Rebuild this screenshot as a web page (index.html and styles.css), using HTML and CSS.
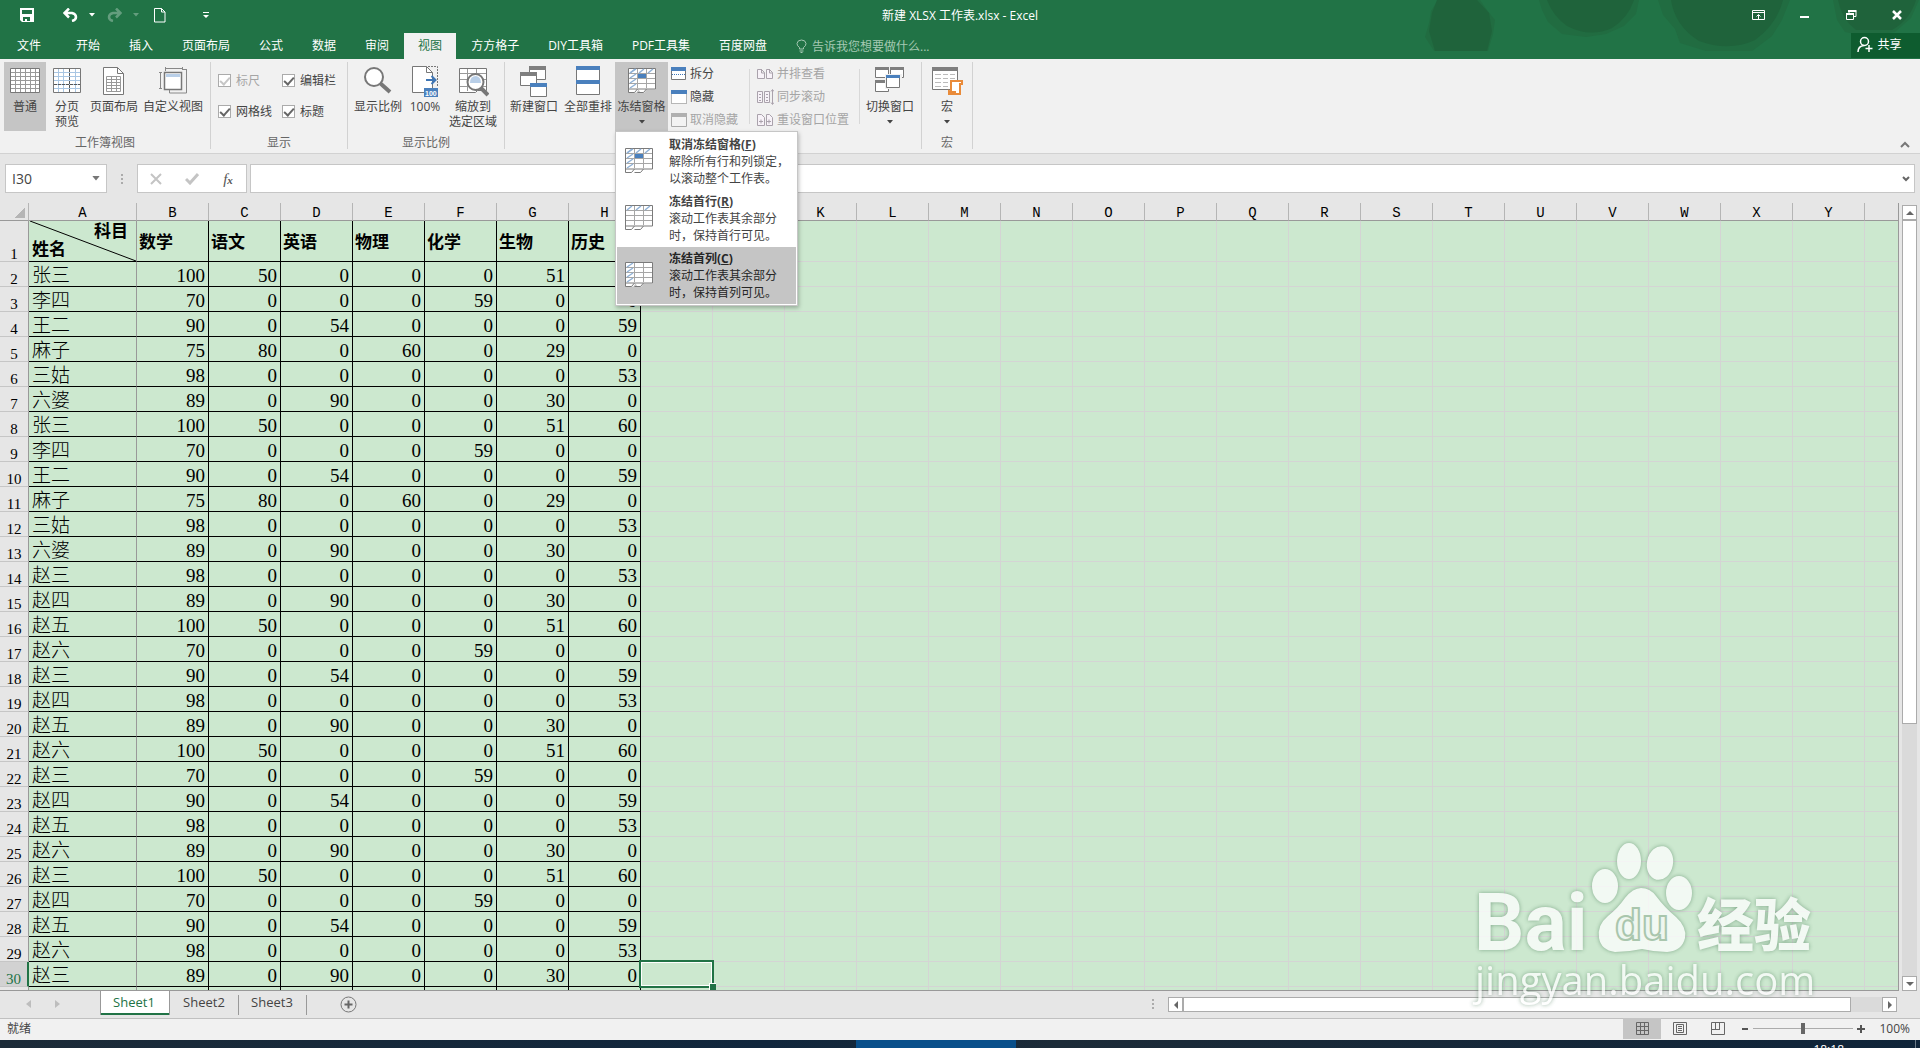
FILE: index.html
```html
<!DOCTYPE html>
<html lang="zh-CN">
<head>
<meta charset="utf-8">
<title>新建 XLSX 工作表.xlsx - Excel</title>
<link rel="stylesheet" href="styles.css">
</head>
<body>
<svg class="sprites" aria-hidden="true">
  <symbol id="sheet" viewBox="0 0 32 32">
    <path d="M2.500 3.500h27v21h-9l-2 3h-4l-2-3-2 3h-8z" fill="#fff" stroke="none"/>
    <path d="M2 8.500h27M2 13.500h27M2 18.500h27M11.500 3v20M20.500 3v20" stroke="#a6a6a6" fill="none"/>
    <path d="M2.500 27.500v-24h27v20.500H2.500M2.500 27.500h6l3-3.500M11.500 27.500h6l3-3.500" stroke="#7a7a7a" fill="none"/>
  </symbol>
  <symbol id="hatch-row" viewBox="0 0 32 32"><path d="M4 8l5-4M13 8l5-4M22 8l5-4" stroke="#8fb1d6" stroke-width="1.500"/></symbol>
  <symbol id="hatch-col" viewBox="0 0 32 32"><path d="M4 8l6-4M4 13l6-4M4 18l6-4M4 23l6-4" stroke="#8fb1d6" stroke-width="1.500"/></symbol>
  <symbol id="freeze" viewBox="0 0 32 32"><use href="#sheet"/><use href="#hatch-row"/><use href="#hatch-col"/><path d="M12 9h8v4h-8z" fill="#4a80bd"/></symbol>
  <symbol id="down" viewBox="0 0 6 4"><path d="M0 0h6L3 3.500z" fill="currentColor"/></symbol>
</svg>

<header class="top">
  <svg class="splashes" width="520" height="52" aria-hidden="true">
    <g fill="#216c41">
      <path d="M38 0h42l7 10 8 10-2 14-5 17H34l-9-14 4-14 2-12z"/>
      <path d="M139 0h100l-3 14-12 12-18 8-20 3-24-3-14-12-6-12z"/>
      <path d="M258 0h132l-8 20-10 16-20 15h-46l-26-8-5-14-12-14z"/>
      <path d="M433 0h86l-8 18-16 14-30 4-20-4-8-12z"/>
    </g>
    <g fill="#1f633b">
      <path d="M37 0h40l12 13 3 18-5 20H35l-6-20 3-18z"/>
      <path d="M147 0h87q-6 18-22 28-22 10-45-2-14-10-20-26z"/>
      <path d="M271 0h112q-6 24-28 40-26 12-56 1-24-15-28-41z"/>
      <path d="M438 0h78q-6 20-24 30h-36q-14-10-18-30z"/>
    </g>
  </svg>
  <div class="titlebar">
    <div class="quick">
      <button class="q-save" aria-label="保存"><svg width="14" height="14"><path fill="#fff" fill-rule="evenodd" d="M0 0h14v14H2l-2-2zM2 2v4h10V2zM3 9v4h2v-2h2v2h3V9z"/></svg></button>
      <button class="q-undo" aria-label="撤消"><svg width="15" height="14"><path d="M2 5h7q4 1 4 4 0 3-4 4M6 0.500L1.500 5 6 9.500" fill="none" stroke="#fff" stroke-width="2.500"/></svg></button>
      <button class="q-caret" aria-label="撤消列表"><svg width="6" height="4" color="#fff"><use href="#down"/></svg></button>
      <button class="q-undo dim" aria-label="恢复"><svg width="15" height="14"><path d="M13 5H6q-4 1-4 4 0 3 4 4M9 0.500L13.500 5 9 9.500" fill="none" stroke="#fff" stroke-width="2.500"/></svg></button>
      <button class="q-caret dim" aria-label="恢复列表"><svg width="6" height="4" color="#fff"><use href="#down"/></svg></button>
      <button class="q-new" aria-label="新建"><svg width="12" height="15"><path d="M.5.5h7l3.500 3.500v10H.5zM7.500.5V4H11" fill="none" stroke="#fff"/></svg></button>
      <button class="q-more" aria-label="自定义快速访问工具栏"><svg width="6" height="7"><path d="M0 0h6v1H0zM0 3h6L3 6z" fill="#fff"/></svg></button>
    </div>
    <h1>新建 XLSX 工作表.xlsx - Excel</h1>
    <div class="window">
      <button aria-label="功能区显示选项"><svg width="14" height="11"><path d="M.5.5h12v9H.5zM0 2.500h13M6.500 9V5M4.500 6.500l2-2 2 2" fill="none" stroke="#fff"/></svg></button>
      <button aria-label="最小化"><svg width="10" height="10"><path d="M0 6h9v2H0z" fill="#fff"/></svg></button>
      <button aria-label="向下还原"><svg width="11" height="11"><path d="M.5 4.500h7v5h-7zM3 4V1.500h7v5H8" fill="none" stroke="#fff"/><path d="M2 0h8.500v2H2zM0 3h8v2H0z" fill="#fff"/></svg></button>
      <button aria-label="关闭"><svg width="10" height="10"><path d="M1 1l8 8M9 1L1 9" stroke="#fff" stroke-width="2.500"/></svg></button>
    </div>
  </div>
  <nav class="tabs">
    <button class="file">文件</button><button>开始</button><button>插入</button><button>页面布局</button><button>公式</button><button>数据</button><button>审阅</button><button class="active">视图</button><button>方方格子</button><button>DIY工具箱</button><button>PDF工具集</button><button>百度网盘</button>
    <label class="tell"><svg width="11" height="14"><path d="M3.500 10V8.500Q1 7 1 4.500 1.500 1 5.500 1 9.500 1 10 4.500 10 7 7.500 8.500V10zM3.500 12h4M4.500 13.500h2" fill="none" stroke="#a5c9b3"/></svg><input type="text" placeholder="告诉我您想要做什么..."></label>
    <button class="share"><svg width="16" height="17"><circle cx="7.500" cy="5.500" r="4" fill="none" stroke="#fff" stroke-width="1.500"/><path d="M1 16q0-6 6-6.500M12 9v7M8.500 12.500h7" fill="none" stroke="#fff" stroke-width="1.500"/></svg>共享</button>
  </nav>
</header>

<section class="ribbon">
  <div class="group g-views">
    <div class="controls">
      <button class="big w42 on"><svg width="32" height="32"><path d="M1.500 3.500h29v24h-29z" fill="#fff" stroke="#777"/><path d="M2 7.500h28M2 11.500h28M2 15.500h28M2 19.500h28M2 23.500h28M6.500 4v23M11.500 4v23M16.500 4v23M21.500 4v23M26.500 4v23" stroke="#999"/></svg>普通</button>
      <button class="big w42"><svg width="32" height="32"><path d="M2.500 3.500h27v24h-27z" fill="#fff" stroke="#777"/><path d="M3 7.500h26M3 11.500h26M3 15.500h26M3 19.500h26M3 23.500h26M7.500 4v23M12.500 4v23M24.500 4v23" stroke="#a9c6e3"/><path d="M18.500 4v23M3 19.500h26" stroke="#555" stroke-dasharray="3 1"/></svg>分页<br>预览</button>
      <button class="big w52"><svg width="32" height="32"><path d="M5.500 2.500h14l6 6v21h-20z" fill="#fff" stroke="#777"/><path d="M19.500 2.500v6h6" fill="none" stroke="#777"/><path d="M8.500 11.500h14v15h-14zM8.500 14.500h14M8.500 17.500h14M8.500 20.500h14M8.500 23.500h14M13.500 11v15M18.500 11v15" fill="none" stroke="#999"/></svg>页面布局</button>
      <button class="big w66"><svg width="32" height="32"><path d="M7.500 7.500h17v17h-17z" fill="#fff" stroke="#777" stroke-width="1.500"/><path d="M9 9h14v3H9z" fill="#b9cfe8"/><path d="M8 3.500h18M8.500 2v4M25.500 2v3M3.500 7v17M2 7.500h3M2 23.500h3M29.500 4v24h-17v-3M25 4.500h4" fill="none" stroke="#888"/></svg>自定义视图</button>
    </div>
    <div class="caption">工作簿视图</div>
  </div>
  <div class="group g-show">
    <div class="controls checks">
      <label class="off"><input type="checkbox" checked disabled>标尺</label>
      <label><input type="checkbox" checked>编辑栏</label>
      <label><input type="checkbox" checked>网格线</label>
      <label><input type="checkbox" checked>标题</label>
    </div>
    <div class="caption">显示</div>
  </div>
  <div class="group g-zoom">
    <div class="controls">
      <button class="big w52"><svg width="32" height="32"><circle cx="12" cy="12" r="9" fill="#fff" stroke="#777" stroke-width="2"/><path d="M18.500 18.500L28 27" stroke="#777" stroke-width="4"/></svg>显示比例</button>
      <button class="big w42"><svg width="32" height="32"><path d="M3.500 27.500v-26h14l6 6v20z" fill="#fff" stroke="#777"/><path d="M17.500 1.500v6h6" fill="none" stroke="#777"/><path d="M19 1.500h9.500V22" fill="none" stroke="#777" stroke-dasharray="2 1"/><path d="M17 15h9M22.500 11l4 4-4 4" fill="none" stroke="#3f76b5" stroke-width="2"/><path d="M15 23h14v9H15z" fill="#4a80bd"/><text x="16" y="31" class="tiny">100</text></svg>100%</button>
      <button class="big w54"><svg width="32" height="32"><path d="M2.500 3.500h27v22h-9l-2 2h-16z" fill="#fff" stroke="#777"/><path d="M3 8.500h26M3 14.500h26M3 21.500h26M10.500 4v22M19.500 4v22" stroke="#999"/><circle cx="18.500" cy="17" r="8" fill="#fff" stroke="#777" stroke-width="2"/><path d="M13 18q0-7 6-7 5 1 5 7z" fill="#b9cfe8"/><path d="M24 23l7 7" stroke="#777" stroke-width="4"/></svg>缩放到<br>选定区域</button>
    </div>
    <div class="caption">显示比例</div>
  </div>
  <div class="group g-window">
    <div class="controls">
      <button class="big w54"><svg width="32" height="32"><g fill="#fff" stroke="#777"><path d="M11.500 1.500h16v13h-16z"/><path d="M2.500 7.500h16v13h-16z"/><path d="M12.500 18.500h16v13h-16z"/></g><path d="M11 1h17v4H11zM2 7h17v4H2z" fill="#7f7f7f"/><path d="M12 18h17v4H12z" fill="#4a80bd"/></svg>新建窗口</button>
      <button class="big w54"><svg width="32" height="32"><path d="M4.500 1.500h23v28h-23z" fill="#fff" stroke="#777"/><path d="M4 1h24v4H4zM4 15h24v4H4z" fill="#4a80bd"/></svg>全部重排</button>
      <div class="drop">
        <button class="big w53 on" aria-expanded="true"><svg width="32" height="32"><use href="#freeze"/></svg>冻结窗格<svg class="arrow" width="6" height="4"><use href="#down"/></svg></button>
        <div class="menu" role="menu">
          <button role="menuitem"><svg width="32" height="32"><use href="#freeze"/></svg><span><b>取消冻结窗格(<u>F</u>)</b>解除所有行和列锁定，<br>以滚动整个工作表。</span></button>
          <button role="menuitem"><svg width="32" height="32"><use href="#sheet"/><use href="#hatch-row"/></svg><span><b>冻结首行(<u>R</u>)</b>滚动工作表其余部分<br>时，保持首行可见。</span></button>
          <button role="menuitem" class="hover"><svg width="32" height="32"><use href="#sheet"/><use href="#hatch-col"/></svg><span><b>冻结首列(<u>C</u>)</b>滚动工作表其余部分<br>时，保持首列可见。</span></button>
        </div>
      </div>
      <div class="stack s1">
        <button><svg width="16" height="14"><path d="M.5 1.500h14v11H.5z" fill="#fff" stroke="#777"/><path d="M0 0h15v4H0z" fill="#4a80bd"/><path d="M1 7.500h13" stroke="#3f76b5" stroke-dasharray="1 1"/></svg>拆分</button>
        <button><svg width="16" height="14"><path d="M.5 1.500h15v12H.5z" fill="#fff" stroke="#777" stroke-dasharray="1 1"/><path d="M0 0h16v4H0z" fill="#4a80bd"/></svg>隐藏</button>
        <button disabled><svg width="16" height="14"><path d="M.5 1.500h15v12H.5z" fill="#f3f3f3" stroke="#aaa"/><path d="M0 0h16v4H0z" fill="#b0b0b0"/></svg>取消隐藏</button>
      </div>
      <div class="stack s2">
        <button disabled><svg width="17" height="14"><path d="M.5 2.500h4l3 3v6h-7zM9.500 2.500h3l3 3v6h-6zM4.500 2v4h3M12.500 2v4h3" fill="#f7f2f8" stroke="#aaa2ac"/></svg>并排查看</button>
        <button disabled><svg width="17" height="16"><path d="M.5 2.500h5v11h-5zM7.500 2.500h5v11h-5zM2 5.500h2M2 8.500h2M2 11.500h2M9 5.500h2M9 8.500h2M9 11.500h2M15.500 1v14M14 2.500l1.500-2 1.500 2M14 13.500l1.500 2 1.500-2" fill="#f7f2f8" stroke="#aaa2ac"/></svg>同步滚动</button>
        <button disabled><svg width="17" height="14"><path d="M.5 1.500h4l3 3v8h-7zM9.500 1.500h3l3 3v8h-6zM2 8.500h4M4 6.500v4M10 8.500h4M12 6.500v4" fill="#f7f2f8" stroke="#aaa2ac"/></svg>重设窗口位置</button>
      </div>
      <button class="big w56"><svg width="32" height="32"><g fill="#fff" stroke="#777"><path d="M1.500 2.500h13v10h-13zM16.500 2.500h13v10h-13zM1.500 15.500h13v11h-13z"/></g><path d="M1 2h14v3H1zM16 2h14v3H16zM1 15h14v3H1z" fill="#7f7f7f"/><path d="M11 9h17v15H11z" fill="#f1f1f1"/><path d="M12.500 10.500h13v12h-13z" fill="#fff" stroke="#777"/><path d="M12 10h14v3H12z" fill="#4a80bd"/></svg>切换窗口<svg class="arrow" width="6" height="4"><use href="#down"/></svg></button>
    </div>
    <div class="caption"></div>
  </div>
  <div class="group g-macro">
    <div class="controls">
      <button class="big w42"><svg width="32" height="32"><path d="M1.500 2.500h25v22h-25z" fill="#fff" stroke="#777"/><path d="M1 2h26v4H1z" fill="#7f7f7f"/><path d="M4 9.500h6M12 9.500h5M19 9.500h5M4 13.500h6M12 13.500h5M19 13.500h5M4 17.500h6M12 17.500h5M4 21.500h6M12 21.500h5" stroke="#bbb"/><path d="M20 27V16h11v3h-2v10H18v-3z" fill="#fff" stroke="#e98b3a" stroke-width="2"/><path d="M17 26h8v3h-8z" fill="#e98b3a"/></svg>宏<svg class="arrow" width="6" height="4"><use href="#down"/></svg></button>
    </div>
    <div class="caption">宏</div>
  </div>
  <button class="collapse" aria-label="折叠功能区"><svg width="10" height="7"><path d="M1 6l4-4 4 4" fill="none" stroke="#777" stroke-width="2"/></svg></button>
</section>

<section class="formula">
  <div class="namebox"><input type="text" value="I30" aria-label="名称框"><svg width="8" height="5" viewBox="0 0 6 4" color="#777"><use href="#down"/></svg></div>
  <i class="dots"></i>
  <div class="fx">
    <button aria-label="取消"><svg width="12" height="12"><path d="M1 1l10 10M11 1L1 11" stroke="#c4c4c4" stroke-width="2"/></svg></button>
    <button aria-label="输入"><svg width="14" height="12"><path d="M1 6l4 4 8-9" fill="none" stroke="#c4c4c4" stroke-width="3"/></svg></button>
    <button class="fn" aria-label="插入函数">f<sub>x</sub></button>
  </div>
  <div class="entry"><input type="text" aria-label="编辑栏"><svg width="8" height="6"><path d="M1 1l3 3 3-3" fill="none" stroke="#666" stroke-width="2"/></svg></div>
</section>

<main class="sheet">
  <div class="grid"><table id="cells"></table></div>
  <div class="vbar">
    <button aria-label="向上滚动"><svg width="8" height="4"><path d="M0 4h8L4 0z" fill="#666"/></svg></button>
    <div class="thumb"></div><div class="track"></div>
    <button aria-label="向下滚动"><svg width="8" height="4"><path d="M0 0h8L4 4z" fill="#666"/></svg></button>
  </div>
</main>

<footer>
  <div class="sheets">
    <button class="nav" aria-label="上一个"><svg width="5" height="8"><path d="M5 0v8L0 4z" fill="#bdbdbd"/></svg></button>
    <button class="nav" aria-label="下一个"><svg width="5" height="8"><path d="M0 0v8l5-4z" fill="#bdbdbd"/></svg></button>
    <button class="tab current">Sheet1</button><button class="tab">Sheet2</button><button class="tab">Sheet3</button>
    <button class="add" aria-label="新工作表"><svg width="17" height="17"><circle cx="8.500" cy="8.500" r="7.500" fill="none" stroke="#777"/><path d="M4.500 8.500h8M8.500 4.500v8" stroke="#666" stroke-width="2"/></svg></button>
    <i class="dots"></i>
    <div class="hbar">
      <button aria-label="向左滚动"><svg width="4" height="8"><path d="M4 0v8L0 4z" fill="#666"/></svg></button>
      <div class="thumb"></div><div class="track"></div>
      <button aria-label="向右滚动"><svg width="4" height="8"><path d="M0 0v8l4-4z" fill="#666"/></svg></button>
    </div>
  </div>
  <div class="status">
    <span>就绪</span>
    <div class="modes">
      <button class="on" aria-label="普通"><svg width="13" height="13"><path d="M.5.5h12v12H.5zM0 4.500h13M0 8.500h13M4.500 0v13M8.500 0v13" fill="none" stroke="#666"/></svg></button>
      <button aria-label="页面布局"><svg width="14" height="13"><path d="M.5.5h13v12H.5zM3.500 2.500h7v8h-7zM5 4.500h4M5 6.500h4M5 8.500h4" fill="none" stroke="#666"/></svg></button>
      <button aria-label="分页预览"><svg width="14" height="13"><path d="M.5.5h13v12H.5zM4.500 0v7M8.500 0v7M0 7.500h9" fill="none" stroke="#666"/></svg></button>
    </div>
    <button class="step" aria-label="缩小"><svg width="8" height="8"><path d="M1 3h6v2H1z" fill="#555"/></svg></button>
    <input type="range" min="0" max="100" value="50" aria-label="显示比例">
    <button class="step" aria-label="放大"><svg width="8" height="8"><path d="M0 3h8v2H0zM3 0h2v8H3z" fill="#555"/></svg></button>
    <span class="pct">100%</span>
  </div>
</footer>
<div class="taskbar"><span></span><time>18:18</time></div>

<svg class="watermark" width="350" height="170" viewBox="0 0 350 170" aria-hidden="true">
  <g class="mark">
    <ellipse cx="135" cy="45" rx="13" ry="17"/><ellipse cx="159" cy="20" rx="12" ry="18"/>
    <ellipse cx="190" cy="22" rx="13" ry="17" transform="rotate(12 190 22)"/><ellipse cx="209" cy="52" rx="13" ry="17"/>
    <path d="M171 47q9 0 15 8 9 12 20 21 11 10 9 21-3 13-18 14-12 0-25-3-14 3-27 3-14-2-16-14-2-13 9-22 10-8 17-18 8-10 16-10z"/>
    <text x="4" y="109" class="bai">Bai</text>
    <text x="227" y="105" class="exp">经验</text>
    <text x="5" y="154" class="site">jingyan.baidu.com</text>
  </g>
  <text x="145" y="99" class="du">du</text>
</svg>
<script src="grid.js"></script>
</body>
</html>
```
FILE: styles.css
```css
* { box-sizing: border-box; }
body {
  margin: 0; height: 100vh; overflow: hidden; position: relative;
  display: flex; flex-direction: column;
  background: #e6e6e6; color: #444;
  font: 12px/15px "Open Sans", "Noto Sans CJK SC", sans-serif;
}
button, input { font: inherit; color: inherit; border: 0; margin: 0; padding: 0; background: none; }
button { display: flex; align-items: center; justify-content: center; white-space: nowrap; }
svg { display: block; flex: none; }
.sprites { position: absolute; width: 0; height: 0; }

/* title bar and tabs */
.top { position: relative; background: #217346; color: #fff; }
.splashes { position: absolute; right: 0; top: 0; }
.titlebar { position: relative; display: grid; grid-template-columns: 1fr auto 1fr; height: 33px; padding-bottom: 3px; align-items: center; }
.titlebar h1 { margin: 0; font-size: 12px; font-weight: 400; }
.quick, .window { display: flex; }
.window { justify-content: flex-end; }
.quick button { height: 30px; }
.q-save { width: 54px; }
.q-undo { width: 32px; }
.q-caret { width: 12px; }
.q-new { width: 36px; }
.q-more { width: 56px; }
.dim { opacity: .3; }
.window button { width: 46px; height: 30px; }
.tabs { position: relative; display: flex; gap: 1px; height: 26px; }
.tabs > button { padding: 0 14px 2px; }
.tabs .file { padding: 0 17px 2px; margin-right: 3px; }
.tabs .active { background: #f1f1f1; color: #217346; }
.tell { display: flex; align-items: center; gap: 5px; margin: 0 auto 0 14px; }
.tell input { width: 160px; height: 20px; }
.tell input::placeholder { color: #a5c9b3; opacity: 1; }
.tabs .share { width: 69px; height: 25px; padding: 0 12px 2px 0; gap: 4px; background: #0e5c2f; }

/* ribbon */
.ribbon { display: flex; padding-top: 3px; height: 95px; background: #f1f1f1; border-bottom: 1px solid #d2d2d2; }
.group { height: 87px; border-right: 1px solid #d2d2d2; padding: 0 4px; }
.controls { display: flex; height: 69px; }
.caption { height: 18px; padding-top: 5px; text-align: center; color: #666; line-height: 14px; }
.big { flex-direction: column; justify-content: flex-start; padding-top: 3px; height: 69px; }
.big > svg:first-child { margin-bottom: 2px; }
.big .arrow { margin-top: 6px; }
.on { background: #c5c5c5; }
.w42 { width: 42px; }
.w52 { width: 52px; }
.w53 { width: 53px; }
.w54 { width: 54px; }
.w56 { width: 56px; }
.w66 { width: 66px; }
.tiny { font: bold 7px "Liberation Sans", sans-serif; fill: #fff; }
.checks { display: grid; grid-template-columns: 60px auto; grid-template-rows: 31px 31px; column-gap: 4px; padding-top: 3px; width: 125px; margin-left: 3px; }
.checks label { display: flex; align-items: center; gap: 5px; white-space: nowrap; }
.checks .off { color: #a5a5a5; }
.checks input { appearance: none; width: 13px; height: 13px; border: 1px solid #ababab; background: #fff; display: grid; place-items: center; }
.checks input::after { content: ""; width: 4px; height: 8px; border: solid #666; border-width: 0 2px 2px 0; transform: rotate(42deg); margin-top: -2px; }
.checks .off input::after { border-color: #c6c6c6; }
.g-window { padding: 0 3px 0 2px; }
.drop { position: relative; }
.stack { display: flex; flex-direction: column; padding: 0 3px; }
.stack button { height: 23px; gap: 3px; justify-content: flex-start; }
.stack button:disabled { color: #a5a5a5; }
.s1 { width: 82px; background: linear-gradient(#d8d8d8, #d8d8d8) right 0 top 7px / 1px 55px no-repeat; }
.s2 { width: 112px; padding-left: 7px; background: linear-gradient(#d8d8d8, #d8d8d8) right 2px top 7px / 1px 55px no-repeat; }
.collapse { margin: 75px 10px 0 auto; width: 10px; height: 14px; }

/* drop-down menu */
.menu {
  position: absolute; z-index: 5; left: 0; top: 69px; width: 183px; padding: 1px;
  background: #fff; border: 1px solid #c6c6c6; box-shadow: 1px 2px 4px rgba(0, 0, 0, .25);
}
.menu button { width: 100%; height: 57px; padding: 3px 0 0 6px; gap: 14px; align-items: flex-start; justify-content: flex-start; text-align: left; line-height: 17px; }
.menu svg { margin-top: 9px; }
.menu b { display: block; line-height: 17px; }
.menu .hover { background: #c5c5c5; color: #262626; }

/* formula bar */
.formula { display: flex; padding: 10px 5px 10px; height: 49px; }
.formula > div { display: flex; align-items: center; height: 29px; background: #fff; border: 1px solid #c6c6c6; }
.namebox { width: 102px; padding: 0 6px; font-size: 14px; }
.namebox input { width: 80px; }
.dots { width: 2px; height: 10px; background: repeating-linear-gradient(#ababab 0 2px, transparent 2px 4px); margin: 10px 14px; }
.fx { width: 110px; }
.fx button { flex: 1; }
.fn { font: italic 15px/16px "Liberation Serif", serif; color: #555; }
.fn sub { font-size: 11px; font-weight: 700; vertical-align: baseline; padding-top: 3px; }
.entry { flex: 1; margin-left: 3px; padding: 0 4px; }
.entry input { flex: 1; }

/* worksheet */
.sheet { flex: 1; min-height: 0; display: flex; gap: 3px; }
.grid { flex: 1; min-width: 0; overflow: hidden; border-right: 1px solid #999; border-bottom: 1px solid #999; background: #cce8cf; }
table { width: 100%; table-layout: fixed; border-collapse: separate; border-spacing: 0; font: 300 19px/20px "Liberation Serif", "Noto Sans CJK SC", serif; color: #000; }
th, td { padding: 0; white-space: nowrap; }
.c-head { width: 29px; }
.c-name { width: 108px; }
.c-num { width: 72px; }
thead th { height: 18px; background: #e6e6e6; border-right: 1px solid #b5b5b5; border-bottom: 1px solid #999; font: 14px/14px "Liberation Mono", monospace; vertical-align: bottom; }
thead th:last-child { border-right: 0; }
.corner { background: linear-gradient(135deg, transparent 50%, #b5b5b5 50%) 15px 5px / 10px 10px no-repeat #e6e6e6; }
tbody th { height: 25px; background: #e6e6e6; border-right: 1px solid #999; border-bottom: 1px solid #c6c6c6; font: 400 15px/14px "Liberation Serif", serif; vertical-align: bottom; }
td { height: 25px; padding-top: 4px; border-right: 1px solid #d4d4d4; border-bottom: 1px solid #d4d4d4; }
td:last-child { border-right: 0; }
td.name, td.num { border-bottom-color: #000; }
td.name { padding-left: 3px; border-right-color: #999; }
td.num { padding-right: 3px; border-right-color: #000; text-align: right; }
.titles th, .titles td { height: 41px; }
.titles td.num { padding: 4px 2px 0; text-align: left; }
.titles td { font-size: 17px; font-weight: 700; }
td.split { position: relative; padding: 2px 0 0; vertical-align: top; }
.split svg { position: absolute; left: 0; top: 0; width: 100%; height: 100%; }
.split div { padding: 0 8px 0 3px; line-height: 18px; }
.split div:first-of-type { text-align: right; }
.here th { background: #d2d2d2; color: #217346; border-right: 2px solid #217346; }
.picked { position: relative; }
.picked::before { content: ""; position: absolute; inset: -2px; border: 2px solid #217346; box-shadow: inset 0 0 0 1px #fff; }
.picked::after { content: ""; position: absolute; right: -4px; bottom: -4px; width: 6px; height: 6px; background: #217346; border: solid #fff; border-width: 1px 0 0 1px; }
.vbar { width: 15px; margin: 2px 3px 0 0; display: flex; flex-direction: column; background: #dadada; }
.vbar button, .hbar button, .thumb { background: #fff; border: 1px solid #ababab; }
.vbar button, .hbar button { width: 15px; height: 15px; flex: none; }
.vbar .thumb { flex: 503; }
.vbar .track { flex: 253; }

/* sheet tabs and status bar */
.sheets { display: flex; height: 28px; border-bottom: 1px solid #c0c0c0; padding-right: 23px; }
.nav { width: 29px; height: 25px; }
.nav:first-child { margin-left: 14px; }
.tab { width: 68px; height: 24px; padding: 0 2px 2px 0; font-size: 13px; background: linear-gradient(#999, #999) right 0 top 4px / 1px 20px no-repeat; }
.tab.current { width: 70px; margin: 0 1px 0 28px; background: #fff; color: #217346; border: solid #999; border-width: 0 1px; box-shadow: inset 0 -2px #217346; }
.add { margin-left: 33px; width: 17px; height: 26px; }
.sheets .dots { margin: 8px 14px 0 auto; }
.hbar { flex: 0 0 calc(38% + 8px); height: 15px; margin-top: 6px; display: flex; background: #dadada; }
.hbar .thumb { flex: 668; }
.hbar .track { flex: 31; }
.status { display: flex; align-items: center; height: 21px; padding: 0 10px 2px 7px; background: #f1f1f1; }
.modes { display: flex; margin-left: auto; }
.modes button { width: 38px; height: 21px; }
.step { width: 16px; height: 20px; }
.status input { appearance: none; width: 100px; height: 11px; background: linear-gradient(#ababab, #ababab) center / 100% 1px no-repeat; }
.status input::-webkit-slider-thumb { appearance: none; width: 4px; height: 11px; background: #666; }
.pct { width: 41px; text-align: right; }
.taskbar { height: 8px; display: grid; grid-template-columns: 856px 160px 1fr; background: linear-gradient(90deg, #1c2b38, #10263c 40%, #1c2b38 55%, #0f2439); overflow: hidden; color: #fff; }
.taskbar span { grid-column: 2; background: #094f8a; }
.taskbar time { text-align: right; margin-right: 4px; padding: 2px 71px 0 0; border-right: 1px solid #6b7a88; }

/* watermark */
.watermark { position: absolute; right: 100px; bottom: 37px; overflow: visible; pointer-events: none; }
.mark { fill: #fff; opacity: .75; filter: drop-shadow(0 0 2px rgba(60, 110, 75, .7)); }
.bai { font: 700 79px Roboto, sans-serif; }
.exp { font: 900 57px "Noto Sans CJK SC", sans-serif; }
.site { font: 400 40px "Open Sans", sans-serif; }
.du { font: 700 44px "Liberation Sans", sans-serif; fill: #eef6ef; stroke: #a9c6ad; stroke-width: 2; }
```
FILE: grid.js
```js
const marks = {
  a: [100, 50, 0, 0, 0, 51, 60],
  b: [70, 0, 0, 0, 59, 0, 0],
  c: [90, 0, 54, 0, 0, 0, 59],
  d: [75, 80, 0, 60, 0, 29, 0],
  e: [98, 0, 0, 0, 0, 0, 53],
  f: [89, 0, 90, 0, 0, 30, 0]
};
const students = '张三a 李四b 王二c 麻子d 三姑e 六婆f 张三a 李四b 王二c 麻子d 三姑e 六婆f 赵三e 赵四f 赵五a 赵六b 赵三c 赵四e 赵五f 赵六a 赵三b 赵四c 赵五e 赵六f 赵三a 赵四b 赵五c 赵六e 赵三f'.split(' ');
const subjects = ['数学', '语文', '英语', '物理', '化学', '生物', '历史'];
const letters = 'ABCDEFGHIJKLMNOPQRSTUVWXY'.split('');
const blanks = n => '<td></td>'.repeat(n);
const nums = list => list.map(v => `<td class="num">${v}</td>`).join('');

let html = '<colgroup><col class="c-head"><col class="c-name">' + '<col class="c-num">'.repeat(24) + '<col></colgroup>';
html += '<thead><tr><th class="corner"></th>' + letters.map(l => `<th>${l}</th>`).join('') + '<th></th></tr></thead><tbody>';
html += '<tr class="titles"><th>1</th><td class="name split"><svg viewBox="0 0 107 40" preserveAspectRatio="none"><path d="M1 0L107 40" stroke="#000"/></svg><div>科目</div><div>姓名</div></td>' + nums(subjects) + blanks(18) + '</tr>';
students.forEach((s, i) => {
  const last = i === students.length - 1;
  html += `<tr${last ? ' class="here"' : ''}><th>${i + 2}</th><td class="name">${s.slice(0, 2)}</td>${nums(marks[s[2]])}`;
  html += (last ? '<td class="picked"></td>' + blanks(17) : blanks(18)) + '</tr>';
});
html += '<tr><th></th><td class="name"></td>' + nums(Array(7).fill('')) + blanks(18) + '</tr></tbody>';
document.getElementById('cells').innerHTML = html;
```
